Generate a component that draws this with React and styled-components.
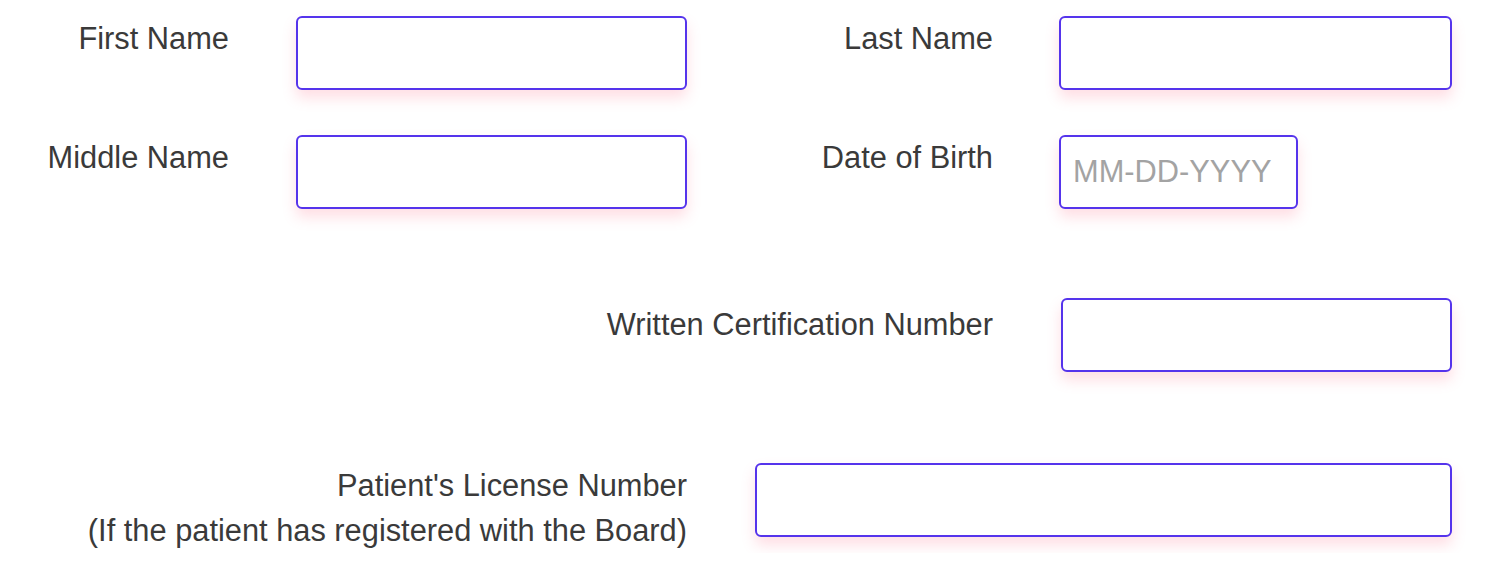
import React from 'react';
import styled, { createGlobalStyle } from 'styled-components';

const GlobalStyle = createGlobalStyle`
  body {
    margin: 0;
    background: #fff;
    font-family: "Liberation Sans", Arial, sans-serif;
  }
`;

const Form = styled.form`
  display: grid;
  grid-template-columns: 296px 391px 372px 393px;
  padding-top: 16px;
`;

const Row = styled.div`
  display: contents;
`;

const Label = styled.label`
  grid-column: ${p => p.$span || 'auto'};
  padding-right: ${p => p.$gap ?? 67}px;
  padding-top: ${p => p.$top ?? 0}px;
  margin-bottom: ${p => p.$after ?? 45}px;
  text-align: right;
  font-size: 30.8px;
  line-height: 45px;
  color: #3a3a3a;
  align-self: start;
  white-space: nowrap;
`;

const Input = styled.input`
  grid-column: ${p => p.$span || 'auto'};
  box-sizing: border-box;
  width: ${p => p.$width || '100%'};
  height: 74px;
  margin: 0 0 ${p => p.$after ?? 45}px ${p => p.$left ?? 0}px;
  padding: 0 12px;
  border: 2px solid #5534ec;
  border-radius: 6px;
  background: #fff;
  box-shadow: 0 8px 14px rgba(255, 105, 130, 0.22);
  font-family: "Liberation Sans", Arial, sans-serif;
  font-size: 30.8px;
  color: #333;
  outline: none;
  align-self: start;

  &::placeholder {
    color: #a3a3a3;
  }
`;

export default function App() {
  return (
    <>
      <GlobalStyle />
      <Form>
        <Row>
          <Label>First Name</Label>
          <Input type="text" />
          <Label $gap={66}>Last Name</Label>
          <Input type="text" />
        </Row>
        <Row>
          <Label $after={89}>Middle Name</Label>
          <Input type="text" $after={89} />
          <Label $gap={66} $after={89}>Date of Birth</Label>
          <Input type="text" placeholder="MM-DD-YYYY" $width="239px" $after={89} />
        </Row>
        <Row>
          <Label $span="1 / 4" $gap={66} $top={4} $after={91}>Written Certification Number</Label>
          <Input type="text" $left={2} $width="391px" $after={91} />
        </Row>
        <Row>
          <Label $span="1 / 3" $gap={0} $top={0} $after={0}>
            Patient's License Number
            <br />
            (If the patient has registered with the Board)
          </Label>
          <Input type="text" $span="3 / 5" $left={68} $width="697px" $after={0} />
        </Row>
      </Form>
    </>
  );
}
